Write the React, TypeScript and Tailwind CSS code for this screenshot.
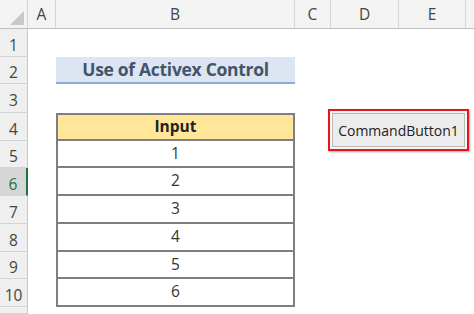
import React from 'react';

const rowHeights = ['h-[28px]', 'h-[27px]', 'h-[29px]', 'h-[28px]', 'h-[27px]', 'h-[28px]', 'h-[28px]', 'h-[28px]', 'h-[27px]', 'h-[28px]', 'h-[7px]'];

const font = { fontFamily: '"Open Sans", "Liberation Sans", sans-serif' };

const RowCell = ({ row }: { row: number }) => {
  // row 4..10 are the table, 4 is the yellow header
  if (row === 2) {
    return (
      <div className="w-[239px] h-full bg-[#dce6f2] border-b-2 border-[#8eaadb] flex items-center justify-center">
        <span className="text-[17.5px] font-bold text-[#44546a] tracking-[-0.3px]">Use of Activex Control</span>
      </div>
    );
  }
  if (row === 4) {
    return (
      <div className="w-[239px] h-full bg-[#ffe699] border-2 border-[#7f7f7f] flex items-center justify-center">
        <span className="text-[15.5px] font-bold text-[#222]">Input</span>
      </div>
    );
  }
  if (row >= 5 && row <= 10) {
    return (
      <div className="w-[239px] h-full bg-white border-2 border-t-0 border-[#7f7f7f] flex items-center justify-center">
        <span className="text-[15.5px] text-[#333]">{row - 4}</span>
      </div>
    );
  }
  return <div className="w-[239px] h-full" />;
};

export default function App() {
  const cols = [
    { label: 'A', w: 'w-[28px]' },
    { label: 'B', w: 'w-[239px]' },
    { label: 'C', w: 'w-[36px]' },
    { label: 'D', w: 'w-[68px]' },
    { label: 'E', w: 'w-[67px]' },
  ];

  return (
    <div className="relative w-[474px] h-[314px] overflow-hidden bg-white" style={font}>
      {/* column headers */}
      <div className="flex h-[29px] bg-[#f3f3f3] border-b border-[#bfbfbf]">
        <div className="w-[28px] h-full border-r border-[#d4d4d4] flex items-end justify-end p-[3px]">
          <svg width="14" height="14" viewBox="0 0 14 14">
            <polygon points="14,0 14,14 0,14" fill="#c8c8c8" />
          </svg>
        </div>
        {cols.map(c => (
          <div key={c.label} className={`${c.w} h-full border-r border-[#d4d4d4] flex items-center justify-center pt-[2px] text-[15.5px] text-[#444]`}>
            {c.label}
          </div>
        ))}
        <div className="flex-1" />
      </div>

      {/* rows */}
      {rowHeights.map((h, i) => {
        const row = i + 1;
        const selected = row === 6;
        return (
          <div key={row} className={`flex ${h}`}>
            <div
              className={`w-[28px] h-full shrink-0 border-b border-[#d4d4d4] flex items-center justify-center pt-[6px] text-[15.5px] ${
                selected ? 'bg-[#d6d6d6] text-[#217346] border-r-2 border-r-[#217346]' : 'bg-[#efefef] text-[#444] border-r border-r-[#c8c8c8]'
              }`}
            >
              {row <= 10 ? row : ''}
            </div>
            <div className="w-[28px] h-full shrink-0" />
            <RowCell row={row} />
            <div className="flex-1" />
          </div>
        );
      })}

      {/* ActiveX command button floating over the sheet */}
      <div className="absolute left-[328px] top-[109px] w-[141px] h-[42px] border-2 border-[#e3161e] shadow-[1px_1px_2px_rgba(0,0,0,0.35)] p-[2px] bg-[#f6f6f6]">
        <div className="w-full h-full bg-[#ececec] border border-[#b9b9b9] flex items-center justify-center">
          <span className="text-[14px] text-[#222]">CommandButton1</span>
        </div>
      </div>
    </div>
  );
}
